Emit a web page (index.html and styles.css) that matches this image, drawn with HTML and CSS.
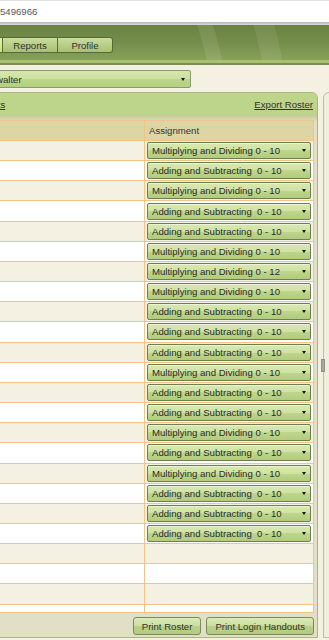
FILE: index.html
```html
<!DOCTYPE html>
<html lang="en">
<head>
    <meta charset="UTF-8">
    <meta name="viewport" content="width=device-width, initial-scale=1.0">
    <title>Class Roster</title>
    <link rel="stylesheet" href="styles.css">
</head>
<body>
    <div class="urlbar"><span class="url-text">5496966</span></div>
    <div class="urlbar-shadow"></div>

    <div class="page">
        <div class="header">
            <div class="tabs">
                <a class="tab active" href="#">Roster</a>
                <a class="tab" href="#">Reports</a>
                <a class="tab" href="#">Profile</a>
            </div>
        </div>
        <div class="header-stripe"></div>
        <div class="header-line"></div>

        <div class="main">
            <div class="class-select">
                <span>walter</span>
                <span class="caret"></span>
            </div>

            <div class="layout">
                <div class="panel">
                    <div class="panel-head">
                        <a href="#">Manage Students</a>
                        <a href="#">Export Roster</a>
                    </div>

                    <div class="panel-body">
                        <div class="table-wrap">
                            <table class="roster">
                                <colgroup>
                                    <col class="col-name">
                                    <col class="col-assign">
                                </colgroup>
                                <thead>
                                    <tr><th class="name">Student</th><th class="assign">Assignment</th></tr>
                                </thead>
                                <tbody>
                                    <tr><td class="name"></td><td class="assign"><div class="dropdown"><span class="label">Multiplying and Dividing 0 - 10</span><span class="caret"></span></div></td></tr>
                                    <tr><td class="name"></td><td class="assign"><div class="dropdown"><span class="label">Adding and Subtracting  0 - 10</span><span class="caret"></span></div></td></tr>
                                    <tr><td class="name"></td><td class="assign"><div class="dropdown"><span class="label">Multiplying and Dividing 0 - 10</span><span class="caret"></span></div></td></tr>
                                    <tr><td class="name"></td><td class="assign"><div class="dropdown"><span class="label">Adding and Subtracting  0 - 10</span><span class="caret"></span></div></td></tr>
                                    <tr><td class="name"></td><td class="assign"><div class="dropdown"><span class="label">Adding and Subtracting  0 - 10</span><span class="caret"></span></div></td></tr>
                                    <tr><td class="name"></td><td class="assign"><div class="dropdown"><span class="label">Multiplying and Dividing 0 - 10</span><span class="caret"></span></div></td></tr>
                                    <tr><td class="name"></td><td class="assign"><div class="dropdown"><span class="label">Multiplying and Dividing 0 - 12</span><span class="caret"></span></div></td></tr>
                                    <tr><td class="name"></td><td class="assign"><div class="dropdown"><span class="label">Multiplying and Dividing 0 - 10</span><span class="caret"></span></div></td></tr>
                                    <tr><td class="name"></td><td class="assign"><div class="dropdown"><span class="label">Adding and Subtracting  0 - 10</span><span class="caret"></span></div></td></tr>
                                    <tr><td class="name"></td><td class="assign"><div class="dropdown"><span class="label">Adding and Subtracting  0 - 10</span><span class="caret"></span></div></td></tr>
                                    <tr><td class="name"></td><td class="assign"><div class="dropdown"><span class="label">Adding and Subtracting  0 - 10</span><span class="caret"></span></div></td></tr>
                                    <tr><td class="name"></td><td class="assign"><div class="dropdown"><span class="label">Multiplying and Dividing 0 - 10</span><span class="caret"></span></div></td></tr>
                                    <tr><td class="name"></td><td class="assign"><div class="dropdown"><span class="label">Adding and Subtracting  0 - 10</span><span class="caret"></span></div></td></tr>
                                    <tr><td class="name"></td><td class="assign"><div class="dropdown"><span class="label">Adding and Subtracting  0 - 10</span><span class="caret"></span></div></td></tr>
                                    <tr><td class="name"></td><td class="assign"><div class="dropdown"><span class="label">Multiplying and Dividing 0 - 10</span><span class="caret"></span></div></td></tr>
                                    <tr><td class="name"></td><td class="assign"><div class="dropdown"><span class="label">Adding and Subtracting  0 - 10</span><span class="caret"></span></div></td></tr>
                                    <tr><td class="name"></td><td class="assign"><div class="dropdown"><span class="label">Multiplying and Dividing 0 - 10</span><span class="caret"></span></div></td></tr>
                                    <tr><td class="name"></td><td class="assign"><div class="dropdown"><span class="label">Adding and Subtracting  0 - 10</span><span class="caret"></span></div></td></tr>
                                    <tr><td class="name"></td><td class="assign"><div class="dropdown"><span class="label">Adding and Subtracting  0 - 10</span><span class="caret"></span></div></td></tr>
                                    <tr><td class="name"></td><td class="assign"><div class="dropdown"><span class="label">Adding and Subtracting  0 - 10</span><span class="caret"></span></div></td></tr>
                                    <tr><td class="name"></td><td class="assign"></td></tr>
                                    <tr><td class="name"></td><td class="assign"></td></tr>
                                    <tr><td class="name"></td><td class="assign"></td></tr>
                                    <tr><td class="name"></td><td class="assign"></td></tr>
                                </tbody>
                            </table>
                        </div>
                    </div>

                    <div class="panel-foot">
                        <button type="button">Print Roster</button>
                        <button type="button">Print Login Handouts</button>
                    </div>
                </div>

                <div class="splitter"><span class="grip"></span></div>

                <div class="side"></div>
            </div>
        </div>
    </div>
</body>
</html>
```

FILE: styles.css
```css
* {
    margin: 0;
    padding: 0;
    box-sizing: border-box;
}

body {
    font-family: "Liberation Sans", Arial, sans-serif;
    font-size: 9.6px;
    color: #333;
    background: #f4f1e2;
    width: 329px;
    height: 640px;
    overflow: hidden;
}

a {
    color: #333;
}

/* address bar */
.urlbar {
    height: 22px;
    border-top: 1px solid #e2e2e2;
    background: #fff;
    display: flex;
    align-items: center;
    color: #555;
}

.urlbar-shadow {
    height: 3px;
    background: linear-gradient(#b4b4b4, #dcdcdc);
}

/* page is scrolled horizontally */
.page {
    width: 479px;
    margin-left: -150px;
}

.header {
    height: 35px;
    padding: 12px 0 0 98px;
    background:
        radial-gradient(circle at -50px 125px, transparent 416px, rgba(255, 255, 255, 0.09) 417px, rgba(255, 255, 255, 0.09) 431px, transparent 432px),
        radial-gradient(circle at -50px 125px, transparent 470px, rgba(255, 255, 255, 0.08) 471px, rgba(255, 255, 255, 0.08) 490px, transparent 491px),
        linear-gradient(#6a8240, #778f4c 55%, #87a15a);
}

.tabs {
    display: flex;
}

.tab {
    width: 55px;
    height: 16px;
    display: flex;
    align-items: center;
    justify-content: center;
    border: 1px solid #58693a;
    border-left-width: 0;
    background: linear-gradient(#cadd9e, #b8ce86 50%, #a8c073);
    color: #333;
    text-decoration: none;
}

.tab:first-child {
    border-left-width: 1px;
    border-radius: 3px 0 0 3px;
}

.tab:last-child {
    border-radius: 0 3px 3px 0;
}

.tab.active {
    background: linear-gradient(#e2f4a6, #c9e27c);
}

.header-stripe {
    height: 3px;
    background: #a7c16d;
}

.header-line {
    height: 2px;
    background: #7c8c56;
}

.main {
    padding: 5px 0 0 60px;
}

.class-select {
    margin-left: 80px;
    width: 201px;
    height: 18px;
    border: 1px solid #8b9a6c;
    border-radius: 2px;
    background: linear-gradient(#d5e7ac, #cde1a0 50%, #bcd68a 50%, #b5d082);
    display: flex;
    align-items: center;
    justify-content: space-between;
    padding: 0 5px 0 5px;
}

.caret {
    width: 0;
    height: 0;
    border-left: 2.5px solid transparent;
    border-right: 2.5px solid transparent;
    border-top: 3px solid #111;
}

.layout {
    display: flex;
    height: 546px;
    margin-top: 4px;
}

.panel {
    width: 408px;
    flex: none;
    display: flex;
    flex-direction: column;
    border: 1px solid #a9b682;
    border-radius: 6px 6px 0 0;
    background: #e1dfc5;
}

.panel-head {
    height: 22px;
    display: flex;
    align-items: center;
    justify-content: space-between;
    padding: 0 4px 0 19px;
    background: #bdd58b;
    border-radius: 5px 5px 0 0;
}

.panel-body {
    padding: 5px 3px 0;
    background: linear-gradient(#c3ca96, #d9d9b5 5px, #e1dfc5 6px);
}

.table-wrap {
    height: 493px;
    overflow: hidden;
    border-bottom: 1px solid #f2c488;
}

.roster {
    width: 400px;
    table-layout: fixed;
    border-collapse: separate;
    border-spacing: 0;
    border: 1px solid #f2c488;
    border-bottom: 0;
}

.col-name {
    width: 230px;
}

.roster th,
.roster td {
    border-bottom: 1px solid #f2c488;
    text-align: left;
    font-weight: normal;
    vertical-align: middle;
}

.roster .name {
    border-right: 1px solid #f2c488;
    padding: 0;
}

.roster thead tr {
    height: 20px;
}

.roster th {
    background: #ddd6a4;
}

.roster th.assign {
    padding-left: 4px;
}

.roster tbody tr {
    height: 20.17px;
    background: #f4f1e2;
}

.roster tbody tr:nth-child(even) {
    background: #fff;
}

.roster td.assign {
    padding: 0 0 0 2px;
}

.dropdown {
    width: 164px;
    height: 17px;
    border: 1px solid #6e7e4e;
    border-radius: 2px;
    background: linear-gradient(#d8e9b0, #cfe2a3 50%, #bdd68b 50%, #b2cc7e);
    box-shadow: inset 0 1px 0 rgba(255, 255, 255, 0.5);
    display: flex;
    align-items: center;
    justify-content: space-between;
    padding: 0 4px;
    color: #2b2b2b;
}

.dropdown .label {
    white-space: pre;
}

.panel-foot {
    height: 24px;
    display: flex;
    justify-content: flex-end;
    align-items: flex-start;
    gap: 5px;
    padding: 4px 3px 0;
}

.panel-foot button {
    height: 18px;
    padding: 0 8px;
    border: 1px solid #7a8a5a;
    border-radius: 3px;
    background: linear-gradient(#dcebb8, #cadd9d 50%, #b9d08a 50%, #b3cb82);
    font: inherit;
    color: #333;
}

.splitter {
    width: 5px;
    flex: none;
    display: flex;
    align-items: center;
}

.grip {
    flex: none;
    width: 4px;
    height: 13px;
    margin-left: 3px;
    background: #a9a99f;
    border: 1px solid #908f86;
    position: relative;
    z-index: 1;
}

.side {
    width: 200px;
    flex: none;
    border: 1px solid #bcbda2;
    border-radius: 6px 0 0 0;
    background: #f0eedd;
}
```
